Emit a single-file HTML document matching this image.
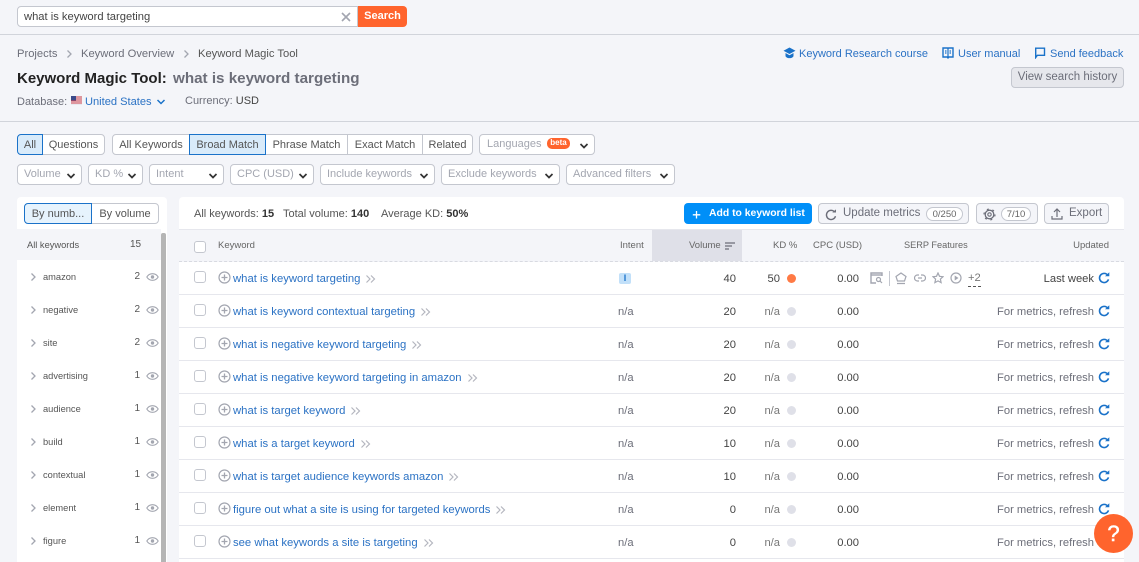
<!DOCTYPE html>
<html><head><meta charset="utf-8">
<style>
html,body{margin:0;padding:0;width:1139px;height:562px;overflow:hidden;background:#f4f5f9;font-family:"Liberation Sans",sans-serif;font-size:11.2px;color:#333}
.a,.t{position:absolute;white-space:nowrap}
.t{line-height:14px}
.b{position:absolute;box-sizing:border-box;border:1px solid #c4c7cf;background:#fff;white-space:nowrap;text-align:center;line-height:20px;color:#555;font-size:11px}
.f{position:absolute;box-sizing:border-box;top:164px;height:21px;border:1px solid #c4c7cf;background:#fff;border-radius:4px;color:#a3a6b0;line-height:19px;padding-left:6px;white-space:nowrap;font-size:11px}
.f svg{position:absolute;right:5px;top:7px}
.l{color:#2b72c4}
.g{color:#6c6e79}
.r{position:absolute;left:179px;width:945px;height:33px;box-sizing:border-box;border-bottom:1px solid #e6e7ed;color:#555}
.r>*{position:absolute}
.cb{left:15px;top:9px;width:12px;height:12px;box-sizing:border-box;border:1px solid #c4c7cf;border-radius:3px;background:#fff}
.pl{left:39px;top:9px}
.k{left:54px;top:10px;line-height:14px;color:#2b72c4;white-space:nowrap;font-size:11.3px}
.k svg{margin-left:5px;vertical-align:-2px}
.i{left:439px;top:10px;line-height:14px;color:#6c6e79}
.v{right:388px;top:10px;line-height:14px;color:#444}
.kd{right:344px;top:10px;line-height:14px;color:#777}
.dot{left:608px;top:12px;width:9px;height:9px;border-radius:50%;background:#dfe0e8}
.c{right:265px;top:10px;line-height:14px;color:#444}
.u{right:30px;top:10px;line-height:14px;color:#6c6e79;white-space:nowrap}
.rf{left:919px;top:10px}
.s{position:absolute;left:17px;width:144px;height:33px;font-size:9.3px;color:#555}
.s>*{position:absolute}
.s .ch{left:13px;top:11px}
.s .n{left:26px;top:9px;line-height:14px}
.s .q{right:21px;top:9px;line-height:14px;font-size:10px;color:#555}
.s .e{left:129px;top:11px}
.h{position:absolute;top:239px;line-height:14px;font-size:9.5px;color:#666;white-space:nowrap}
</style></head>
<body>
<svg width="0" height="0" style="position:absolute">
<defs>
<symbol id="dn" viewBox="0 0 10 8"><path d="M1.500 2 5 5.500 8.500 2" fill="none" stroke="#333" stroke-width="1.700"/></symbol>
<symbol id="pl" viewBox="0 0 13 13"><circle cx="6.500" cy="6.500" r="5.500" fill="none" stroke="#a3a6b0" stroke-width="1.200"/><path d="M6.500 3.500v6M3.500 6.500h6" stroke="#a3a6b0" stroke-width="1.300"/></symbol>
<symbol id="dc" viewBox="0 0 11 10"><path d="M1.500 1.500 5 5 1.500 8.500M6 1.500 9.500 5 6 8.500" fill="none" stroke="#b4b6bf" stroke-width="1.200"/></symbol>
<symbol id="rf" viewBox="0 0 12 12"><path d="M9.800 3.200A4.600 4.600 0 1 0 10.500 7.400" fill="none" stroke="#1a72c9" stroke-width="1.600"/><path d="M7 4.200h4.300V.2z" fill="#1a72c9"/></symbol>
<symbol id="ey" viewBox="0 0 13 10"><path d="M.8 5C3.500.6 9.500.6 12.200 5 9.500 9.400 3.500 9.400.8 5z" fill="none" stroke="#a3a6b0" stroke-width="1.100"/><circle cx="6.500" cy="5" r="1.700" fill="#a3a6b0"/></symbol>
<symbol id="ch" viewBox="0 0 7 10"><path d="M1.500 1.500 5 5 1.500 8.500" fill="none" stroke="#a3a6b0" stroke-width="1.300"/></symbol>
</defs>
</svg>

<!-- search -->
<div class="a" style="left:17px;top:6px;width:341px;height:21px;box-sizing:border-box;background:#fff;border:1px solid #c4c7cf;border-radius:4px 0 0 4px"></div>
<div class="t" style="left:24px;top:10px;color:#444">what is keyword targeting</div>
<svg class="a" style="left:341px;top:12px" width="10" height="10"><path d="M1 1l8 8M9 1l-8 8" stroke="#a3a6b0" stroke-width="1.600"/></svg>
<div class="a" style="left:358px;top:6px;width:49px;height:21px;background:#ff642d;border-radius:0 4px 4px 0;color:#fff;font-weight:bold;font-size:11px;text-align:center;line-height:20px">Search</div>
<div class="a" style="left:0;top:34px;width:1139px;height:1px;background:#d1d4db"></div>

<!-- breadcrumb -->
<div class="t g" style="left:17px;top:47px">Projects</div>
<svg class="a" style="left:66px;top:49px" width="7" height="10"><use href="#ch"/></svg>
<div class="t g" style="left:81px;top:47px">Keyword Overview</div>
<svg class="a" style="left:183px;top:49px" width="7" height="10"><use href="#ch"/></svg>
<div class="t" style="left:198px;top:47px;color:#555">Keyword Magic Tool</div>
<div class="a" style="left:17px;top:70px;font-size:15px;line-height:18px;font-weight:bold;color:#222">Keyword Magic Tool:</div>
<div class="a" style="left:173px;top:70px;font-size:15.200px;line-height:18px;font-weight:bold;color:#6c6e79">what is keyword targeting</div>
<div class="t g" style="left:17px;top:95px;font-size:11px">Database:</div>
<svg class="a" style="left:71px;top:96px" width="11" height="9" viewBox="0 0 11 9"><rect width="11" height="9" fill="#e8e8ee"/><path d="M0 1h11M0 3h11M0 5h11M0 7h11" stroke="#d5434f" stroke-width="1"/><rect width="5" height="4.500" fill="#3c4a8a"/></svg>
<div class="t l" style="left:85px;top:95px;font-size:11.100px">United States</div>
<svg class="a" style="left:156px;top:98px" width="10" height="8" viewBox="0 0 10 8"><path d="M1.500 2 5 5.500 8.500 2" fill="none" stroke="#1a72c9" stroke-width="1.500"/></svg>
<div class="t g" style="left:185px;top:94px;font-size:11px">Currency: <span style="color:#444">USD</span></div>

<!-- top right -->
<svg class="a" style="left:783px;top:47px" width="13" height="12" viewBox="0 0 13 12"><path d="M6.500 .5 12.500 3.700 6.500 7 .5 3.700z" fill="#1a72c9"/><path d="M2.500 6v3.200C4 11.800 9 11.800 10.500 9.200V6L6.500 8.200z" fill="#1a72c9"/></svg>
<div class="t l" style="left:799px;top:47px;font-size:11px">Keyword Research course</div>
<svg class="a" style="left:942px;top:47px" width="12" height="12" viewBox="0 0 12 12"><path d="M1 1h4.500l.5.500.5-.5H11v9H6.800L6 11l-.8-1H1z" fill="none" stroke="#1a72c9" stroke-width="1.400"/><path d="M6 1.500V10M3 4h1.500M7.500 4H9M3 6h1.500M7.500 6H9" stroke="#1a72c9" stroke-width="1.200"/></svg>
<div class="t l" style="left:958px;top:47px;font-size:11px">User manual</div>
<svg class="a" style="left:1034px;top:47px" width="12" height="12" viewBox="0 0 12 12"><path d="M1.700 10.500V1.200h8.800v7.100H3.300z" fill="none" stroke="#1a72c9" stroke-width="1.400"/></svg>
<div class="t l" style="left:1050px;top:47px;font-size:11px">Send feedback</div>
<div class="b" style="left:1011px;top:67px;width:113px;height:21px;background:#e6e7ec;border-radius:4px;color:#6c6e79;font-size:11.500px;line-height:19px">View search history</div>
<div class="a" style="left:0;top:121px;width:1139px;height:1px;background:#d1d4db"></div>

<!-- tabs -->
<div class="b" style="left:42px;top:134px;width:63px;height:21px;border-radius:0 4px 4px 0">Questions</div>
<div class="b" style="left:17px;top:134px;width:26px;height:21px;border-radius:4px 0 0 4px;background:#d9ebfa;border-color:#1a72c9">All</div>
<div class="b" style="left:112px;top:134px;width:78px;height:21px;border-radius:4px 0 0 4px">All Keywords</div>
<div class="b" style="left:265px;top:134px;width:83px;height:21px">Phrase Match</div>
<div class="b" style="left:347px;top:134px;width:76px;height:21px">Exact Match</div>
<div class="b" style="left:422px;top:134px;width:51px;height:21px;border-radius:0 4px 4px 0">Related</div>
<div class="b" style="left:189px;top:134px;width:77px;height:21px;background:#d9ebfa;border-color:#1a72c9">Broad Match</div>
<div class="f" style="left:479px;top:134px;width:116px;padding-left:7px">Languages<span class="a" style="left:67px;top:3px;width:23px;height:11px;background:#ff642d;border-radius:5px;color:#fff;font-size:8px;font-weight:bold;line-height:10px;text-align:center">beta</span><svg width="10" height="8"><use href="#dn"/></svg></div>

<!-- filters -->
<div class="f" style="left:17px;width:65px">Volume<svg width="10" height="8"><use href="#dn"/></svg></div>
<div class="f" style="left:88px;width:55px">KD %<svg width="10" height="8"><use href="#dn"/></svg></div>
<div class="f" style="left:149px;width:75px">Intent<svg width="10" height="8"><use href="#dn"/></svg></div>
<div class="f" style="left:230px;width:84px">CPC (USD)<svg width="10" height="8"><use href="#dn"/></svg></div>
<div class="f" style="left:320px;width:115px">Include keywords<svg width="10" height="8"><use href="#dn"/></svg></div>
<div class="f" style="left:441px;width:119px">Exclude keywords<svg width="10" height="8"><use href="#dn"/></svg></div>
<div class="f" style="left:566px;width:109px">Advanced filters<svg width="10" height="8"><use href="#dn"/></svg></div>

<!-- left panel -->
<div class="a" style="left:17px;top:197px;width:150px;height:365px;background:#fff;border-radius:4px 4px 0 0"></div>
<div class="b" style="left:91px;top:203px;width:68px;height:21px;border-radius:0 4px 4px 0">By volume</div>
<div class="b" style="left:24px;top:203px;width:68px;height:21px;border-radius:4px 0 0 4px;background:#e6f3fd;border-color:#1a72c9">By numb...</div>
<div class="a" style="left:17px;top:229px;width:144px;height:31px;background:#f4f5f9"></div>
<div class="t" style="left:27px;top:238px;font-size:9.300px;color:#555">All keywords</div>
<div class="t" style="left:130px;top:238px;font-size:10px;color:#555">15</div>
<div class="a" style="left:161px;top:233px;width:5px;height:329px;background:#b5b5b5;border-radius:2px 2px 0 0"></div>

<div class="s" style="top:261px"><svg class="ch" width="7" height="10"><use href="#ch"/></svg><span class="n">amazon</span><span class="q">2</span><svg class="e" width="13" height="10"><use href="#ey"/></svg></div>
<div class="s" style="top:294px"><svg class="ch" width="7" height="10"><use href="#ch"/></svg><span class="n">negative</span><span class="q">2</span><svg class="e" width="13" height="10"><use href="#ey"/></svg></div>
<div class="s" style="top:327px"><svg class="ch" width="7" height="10"><use href="#ch"/></svg><span class="n">site</span><span class="q">2</span><svg class="e" width="13" height="10"><use href="#ey"/></svg></div>
<div class="s" style="top:360px"><svg class="ch" width="7" height="10"><use href="#ch"/></svg><span class="n">advertising</span><span class="q">1</span><svg class="e" width="13" height="10"><use href="#ey"/></svg></div>
<div class="s" style="top:393px"><svg class="ch" width="7" height="10"><use href="#ch"/></svg><span class="n">audience</span><span class="q">1</span><svg class="e" width="13" height="10"><use href="#ey"/></svg></div>
<div class="s" style="top:426px"><svg class="ch" width="7" height="10"><use href="#ch"/></svg><span class="n">build</span><span class="q">1</span><svg class="e" width="13" height="10"><use href="#ey"/></svg></div>
<div class="s" style="top:459px"><svg class="ch" width="7" height="10"><use href="#ch"/></svg><span class="n">contextual</span><span class="q">1</span><svg class="e" width="13" height="10"><use href="#ey"/></svg></div>
<div class="s" style="top:492px"><svg class="ch" width="7" height="10"><use href="#ch"/></svg><span class="n">element</span><span class="q">1</span><svg class="e" width="13" height="10"><use href="#ey"/></svg></div>
<div class="s" style="top:525px"><svg class="ch" width="7" height="10"><use href="#ch"/></svg><span class="n">figure</span><span class="q">1</span><svg class="e" width="13" height="10"><use href="#ey"/></svg></div>

<!-- right panel -->
<div class="a" style="left:179px;top:197px;width:945px;height:365px;background:#fff;border-radius:4px 4px 0 0"></div>
<div class="t" style="left:194px;top:207px;font-size:11px;color:#555">All keywords: <b style="color:#333">15</b></div>
<div class="t" style="left:283px;top:207px;font-size:11px;color:#555">Total volume: <b style="color:#333">140</b></div>
<div class="t" style="left:381px;top:207px;font-size:11px;color:#555">Average KD: <b style="color:#333">50%</b></div>

<div class="a" style="left:684px;top:203px;width:128px;height:21px;background:#008ff8;border-radius:4px;color:#fff;font-weight:bold;font-size:10.400px;line-height:21px;padding-left:25px;box-sizing:border-box">Add to keyword list</div>
<svg class="a" style="left:692px;top:210px" width="9" height="9"><path d="M4.500 1v7.500M.8 4.800h7.500" stroke="#fff" stroke-width="1.300"/></svg>
<div class="a" style="left:818px;top:203px;width:151px;height:21px;box-sizing:border-box;border:1px solid #c4c7cf;border-radius:4px;background:#f4f5f9"></div>
<svg class="a" style="left:825px;top:209px" width="12" height="12"><path d="M9.600 3A4.600 4.600 0 1 0 10.500 7.200" fill="none" stroke="#6c6e79" stroke-width="1.400"/><path d="M7.300 3.500h3.700V.4z" fill="#6c6e79"/></svg>
<div class="t g" style="left:843px;top:206px;font-size:11.500px">Update metrics</div>
<div class="a" style="left:926px;top:207px;width:37px;height:14px;box-sizing:border-box;border:1px solid #c4c7cf;border-radius:7px;background:#fff;font-size:9.500px;line-height:13px;text-align:center;color:#666">0/250</div>
<div class="a" style="left:976px;top:203px;width:62px;height:21px;box-sizing:border-box;border:1px solid #c4c7cf;border-radius:4px;background:#f4f5f9"></div>
<svg class="a" style="left:983px;top:208px" width="13" height="13" viewBox="0 0 13 13"><circle cx="6.500" cy="6.500" r="4.300" fill="none" stroke="#6c6e79" stroke-width="1.300"/><circle cx="6.500" cy="6.500" r="1.700" fill="none" stroke="#6c6e79" stroke-width="1.100"/><circle cx="6.500" cy="6.500" r="5.500" fill="none" stroke="#6c6e79" stroke-width="1.200" stroke-dasharray="2 3.760"/></svg>
<div class="a" style="left:1001px;top:207px;width:30px;height:14px;box-sizing:border-box;border:1px solid #c4c7cf;border-radius:7px;background:#fff;font-size:9.500px;line-height:13px;text-align:center;color:#666">7/10</div>
<div class="a" style="left:1044px;top:203px;width:65px;height:21px;box-sizing:border-box;border:1px solid #c4c7cf;border-radius:4px;background:#f4f5f9"></div>
<svg class="a" style="left:1051px;top:208px" width="12" height="12" viewBox="0 0 12 12"><path d="M6 9V1.500M3 4l3-3 3 3M1 8v3h10V8" fill="none" stroke="#6c6e79" stroke-width="1.200"/></svg>
<div class="t g" style="left:1069px;top:206px;font-size:11.500px">Export</div>

<div class="a" style="left:179px;top:229px;width:945px;height:31px;background:#f4f5f9;border-top:1px solid #e6e7ed;border-bottom:1px dashed #d8dae1"></div>
<div class="a" style="left:652px;top:230px;width:90px;height:31px;background:#dfe0e8"></div>
<div class="a" style="left:194px;top:241px;width:12px;height:12px;box-sizing:border-box;border:1px solid #c4c7cf;border-radius:3px;background:#fff"></div>
<div class="h" style="left:218px">Keyword</div>
<div class="h" style="left:620px">Intent</div>
<div class="h" style="left:689px">Volume</div>
<svg class="a" style="left:725px;top:242px" width="10" height="8"><path d="M0 1h10M0 4h7M0 7h4" stroke="#6c6e79" stroke-width="1.300"/></svg>
<div class="h" style="left:773px">KD %</div>
<div class="h" style="left:813px">CPC (USD)</div>
<div class="h" style="left:904px;top:238px;font-size:9.200px">SERP Features</div>
<div class="h" style="right:30px">Updated</div>

<!-- rows -->
<div class="r" style="top:262px"><div class="cb"></div><svg class="pl" width="13" height="13"><use href="#pl"/></svg><div class="k">what is keyword targeting<svg width="11" height="10"><use href="#dc"/></svg></div>
<div class="a" style="left:440px;top:11px;width:12px;height:11px;background:#c2e0f9;border-radius:2px;color:#1a72c9;font-size:9px;line-height:11px;text-align:center;font-weight:bold">I</div>
<div class="v">40</div><div class="kd" style="color:#444">50</div><div class="dot" style="background:#ff7a45"></div><div class="c">0.00</div>
<svg style="left:691px;top:10px" width="13" height="12" viewBox="0 0 13 12"><path d="M12 4V1H1v10h5" fill="none" stroke="#a3a6b0" stroke-width="1.400"/><path d="M1 3h11" stroke="#a3a6b0" stroke-width="1.400"/><circle cx="8.500" cy="7.500" r="2" fill="none" stroke="#a3a6b0" stroke-width="1.200"/><path d="M10 9l2 2" stroke="#a3a6b0" stroke-width="1.200"/></svg>
<div style="left:710px;top:9px;width:1px;height:15px;background:#c4c7cf"></div>
<svg style="left:716px;top:10px" width="12" height="13" viewBox="0 0 12 13"><path d="M1 4.500 6 1l5 3.500L9.500 9h-7zM2 11.500h8" fill="none" stroke="#a3a6b0" stroke-width="1.200"/></svg>
<svg style="left:735px;top:12px" width="12" height="8" viewBox="0 0 12 8"><path d="M5 1H3.500a3 3 0 0 0 0 6H5M7 1h1.500a3 3 0 0 1 0 6H7M4 4h4" fill="none" stroke="#a3a6b0" stroke-width="1.200"/></svg>
<svg style="left:753px;top:10px" width="12" height="12" viewBox="0 0 12 12"><path d="M6 1l1.500 3.300 3.500.4-2.600 2.400.7 3.500L6 8.900l-3.100 1.700.7-3.500L1 4.700l3.500-.4z" fill="none" stroke="#a3a6b0" stroke-width="1.200"/></svg>
<svg style="left:771px;top:10px" width="12" height="12" viewBox="0 0 12 12"><circle cx="6" cy="6" r="5" fill="none" stroke="#a3a6b0" stroke-width="1.200"/><path d="M4.700 3.500 8.500 6 4.700 8.500z" fill="#a3a6b0"/></svg>
<div style="left:789px;top:9px;line-height:14px;color:#777;border-bottom:1px dashed #555;height:15px">+2</div>
<div class="u" style="color:#444">Last week</div><svg class="rf" width="12" height="12"><use href="#rf"/></svg></div>

<div class="r" style="top:295px"><div class="cb"></div><svg class="pl" width="13" height="13"><use href="#pl"/></svg><div class="k">what is keyword contextual targeting<svg width="11" height="10"><use href="#dc"/></svg></div><div class="i">n/a</div><div class="v">20</div><div class="kd">n/a</div><div class="dot"></div><div class="c">0.00</div><div class="u">For metrics, refresh</div><svg class="rf" width="12" height="12"><use href="#rf"/></svg></div>
<div class="r" style="top:328px"><div class="cb"></div><svg class="pl" width="13" height="13"><use href="#pl"/></svg><div class="k">what is negative keyword targeting<svg width="11" height="10"><use href="#dc"/></svg></div><div class="i">n/a</div><div class="v">20</div><div class="kd">n/a</div><div class="dot"></div><div class="c">0.00</div><div class="u">For metrics, refresh</div><svg class="rf" width="12" height="12"><use href="#rf"/></svg></div>
<div class="r" style="top:361px"><div class="cb"></div><svg class="pl" width="13" height="13"><use href="#pl"/></svg><div class="k">what is negative keyword targeting in amazon<svg width="11" height="10"><use href="#dc"/></svg></div><div class="i">n/a</div><div class="v">20</div><div class="kd">n/a</div><div class="dot"></div><div class="c">0.00</div><div class="u">For metrics, refresh</div><svg class="rf" width="12" height="12"><use href="#rf"/></svg></div>
<div class="r" style="top:394px"><div class="cb"></div><svg class="pl" width="13" height="13"><use href="#pl"/></svg><div class="k">what is target keyword<svg width="11" height="10"><use href="#dc"/></svg></div><div class="i">n/a</div><div class="v">20</div><div class="kd">n/a</div><div class="dot"></div><div class="c">0.00</div><div class="u">For metrics, refresh</div><svg class="rf" width="12" height="12"><use href="#rf"/></svg></div>
<div class="r" style="top:427px"><div class="cb"></div><svg class="pl" width="13" height="13"><use href="#pl"/></svg><div class="k">what is a target keyword<svg width="11" height="10"><use href="#dc"/></svg></div><div class="i">n/a</div><div class="v">10</div><div class="kd">n/a</div><div class="dot"></div><div class="c">0.00</div><div class="u">For metrics, refresh</div><svg class="rf" width="12" height="12"><use href="#rf"/></svg></div>
<div class="r" style="top:460px"><div class="cb"></div><svg class="pl" width="13" height="13"><use href="#pl"/></svg><div class="k">what is target audience keywords amazon<svg width="11" height="10"><use href="#dc"/></svg></div><div class="i">n/a</div><div class="v">10</div><div class="kd">n/a</div><div class="dot"></div><div class="c">0.00</div><div class="u">For metrics, refresh</div><svg class="rf" width="12" height="12"><use href="#rf"/></svg></div>
<div class="r" style="top:493px"><div class="cb"></div><svg class="pl" width="13" height="13"><use href="#pl"/></svg><div class="k">figure out what a site is using for targeted keywords<svg width="11" height="10"><use href="#dc"/></svg></div><div class="i">n/a</div><div class="v">0</div><div class="kd">n/a</div><div class="dot"></div><div class="c">0.00</div><div class="u">For metrics, refresh</div><svg class="rf" width="12" height="12"><use href="#rf"/></svg></div>
<div class="r" style="top:526px"><div class="cb"></div><svg class="pl" width="13" height="13"><use href="#pl"/></svg><div class="k">see what keywords a site is targeting<svg width="11" height="10"><use href="#dc"/></svg></div><div class="i">n/a</div><div class="v">0</div><div class="kd">n/a</div><div class="dot"></div><div class="c">0.00</div><div class="u">For metrics, refresh</div></div>

<!-- help -->
<div class="a" style="left:1094px;top:514px;width:39px;height:39px;border-radius:50%;background:#ff642d;color:#fff;font-size:22px;-webkit-text-stroke:.5px #fff;line-height:39px;text-align:center">?</div>
</body></html>
